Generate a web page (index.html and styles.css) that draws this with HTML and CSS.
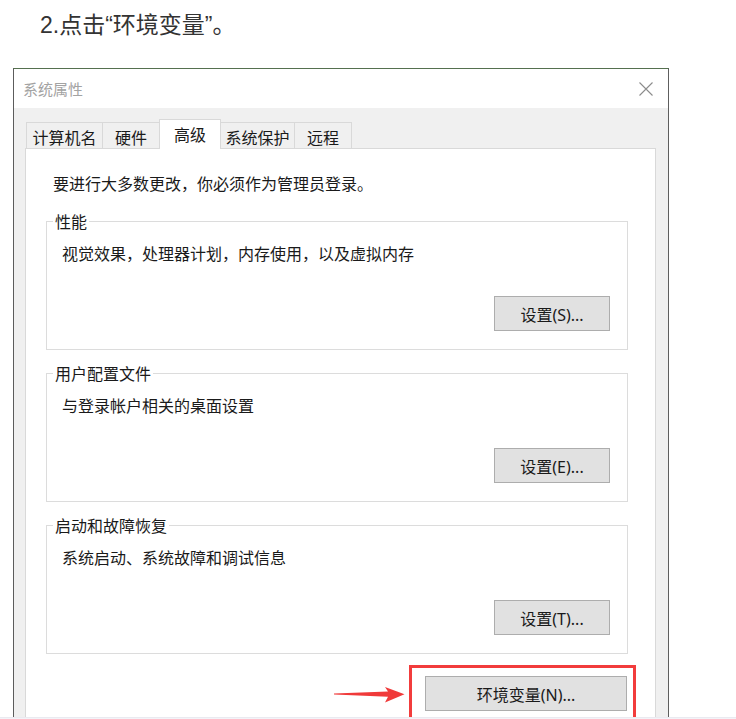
FILE: index.html
```html
<!DOCTYPE html>
<html lang="zh-CN">
<head>
<meta charset="utf-8">
<title>环境变量</title>
<link rel="stylesheet" href="styles.css">
</head>
<body>
<div class="page">
  <p class="step">2.点击“环境变量”。</p>
  <div class="shot">
    <div class="dialog">
      <div class="titlebar">
        <span class="title">系统属性</span>
        <svg class="close" width="14" height="14" viewBox="0 0 14 14"><path d="M0.5 0.5 L13.5 13.5 M13.5 0.5 L0.5 13.5" stroke="#8c8c8c" stroke-width="1.1" fill="none"/></svg>
      </div>
      <div class="body">
        <div class="tabs">
          <div class="tab w76">计算机名</div>
          <div class="tab w57">硬件</div>
          <div class="tab active">高级</div>
          <div class="tab w74">系统保护</div>
          <div class="tab w57">远程</div>
        </div>
        <div class="panel">
          <p class="intro">要进行大多数更改，你必须作为管理员登录。</p>
          <fieldset class="group">
            <legend>性能</legend>
            <p class="desc">视觉效果，处理器计划，内存使用，以及虚拟内存</p>
            <div class="actions"><button class="btn">设置(S)...</button></div>
          </fieldset>
          <fieldset class="group">
            <legend>用户配置文件</legend>
            <p class="desc">与登录帐户相关的桌面设置</p>
            <div class="actions"><button class="btn">设置(E)...</button></div>
          </fieldset>
          <fieldset class="group">
            <legend>启动和故障恢复</legend>
            <p class="desc">系统启动、系统故障和调试信息</p>
            <div class="actions"><button class="btn">设置(T)...</button></div>
          </fieldset>
          <div class="env-row"><button class="btn env">环境变量(N)...</button></div>
        </div>
      </div>
      <div class="highlight"></div>
      <svg class="arrow" width="72" height="18" viewBox="0 0 72 18"><path d="M0 7.6 L54 5.6 L51 1 L70.5 8.2 L51 16.6 L54 10.8 L0 8.6 Z" fill="#f03a3a"/></svg>
    </div>
  </div>
  <div class="pagebar"></div>
</div>
</body>
</html>
```
FILE: styles.css
```css
html, body {
  margin: 0;
  padding: 0;
  background: #ffffff;
}
.page {
  width: 736px;
  height: 719px;
  overflow: hidden;
}
.step {
  margin: 0;
  padding: 10px 0 0 40px;
  height: 58px;
  box-sizing: border-box;
  font-family: "Liberation Sans", "Noto Sans CJK SC", sans-serif;
  font-size: 23px;
  line-height: 30px;
  color: #333333;
}
.shot {
  height: 659px;
  overflow: hidden;
  padding-top: 10px;
  box-sizing: border-box;
}
.dialog {
  position: relative;
  margin-left: 13px;
  width: 656px;
  height: 700px;
  box-sizing: border-box;
  border-left: 1px solid #5c5c5c;
  border-right: 1px solid #5e5e5e;
  border-top: 1px solid #55704f;
  font-family: "Noto Sans", "Noto Sans CJK SC", sans-serif;
  font-size: 16px;
  color: #1a1a1a;
}
.titlebar {
  height: 39px;
  background: #ffffff;
  display: flex;
  align-items: center;
  justify-content: space-between;
  padding: 0 15px 0 9px;
}
.title {
  font-family: "Noto Sans CJK SC", sans-serif;
  font-size: 15px;
  color: #a3a3a3;
}
.close {
  display: block;
}
.body {
  background: #f0f0f0;
  padding: 11px 12px 0 11px;
  height: 660px;
}
.tabs {
  display: flex;
  align-items: flex-end;
  margin-left: 1px;
  margin-bottom: -1px;
  font-family: "Noto Sans CJK SC", sans-serif;
}
.tab {
  height: 26px;
  margin-bottom: 1px;
  box-sizing: border-box;
  border: 1px solid #d9d9d9;
  border-bottom: none;
  margin-right: -1px;
  display: flex;
  align-items: center;
  justify-content: center;
  font-size: 16px;
  line-height: 20px;
  padding-top: 2px;
  color: #1a1a1a;
  background: #f0f0f0;
}
.w76 { width: 77px; }
.w57 { width: 58px; }
.w74 { width: 75px; }
.tab.active {
  position: relative;
  z-index: 1;
  width: 62px;
  height: 30px;
  margin-bottom: 0;
  background: #ffffff;
  padding-top: 0;
  padding-bottom: 2px;
}
.panel {
  background: #ffffff;
  border: 1px solid #d9d9d9;
  height: 640px;
  padding: 24px 0 0 0;
  font-family: "Noto Sans CJK SC", sans-serif;
}
.intro {
  margin: 0 0 18px 27px;
  line-height: 20px;
  font-size: 16px;
}
.group {
  margin: 0 27px 13px 20px;
  padding: 0 17px 18px 15px;
  border: 1px solid #dcdcdc;
  min-width: 0;
}
.group legend {
  margin-left: -9px;
  padding: 0 2px;
  line-height: 20px;
  font-size: 16px;
}
.desc {
  margin: 12px 0 33px 0;
  line-height: 20px;
  font-size: 16px;
}
.actions {
  display: flex;
  justify-content: flex-end;
}
.btn {
  width: 116px;
  height: 35px;
  background: #e1e1e1;
  border: 1px solid #adadad;
  border-radius: 0;
  padding: 0;
  font-family: "Noto Sans", "Noto Sans CJK SC", sans-serif;
  font-size: 16px;
  color: #1a1a1a;
}
.env-row {
  display: flex;
  justify-content: flex-end;
  margin: 22px 28px 0 0;
}
.btn.env {
  width: 202px;
}
.highlight {
  position: absolute;
  left: 395px;
  top: 596px;
  width: 227px;
  height: 200px;
  box-sizing: border-box;
  border: 3px solid #f23c3c;
}
.arrow {
  position: absolute;
  left: 320px;
  top: 617px;
}
.pagebar {
  height: 2px;
  background: #f3f3f8;
  border-top: 1px solid #eaeaf0;
}
```
